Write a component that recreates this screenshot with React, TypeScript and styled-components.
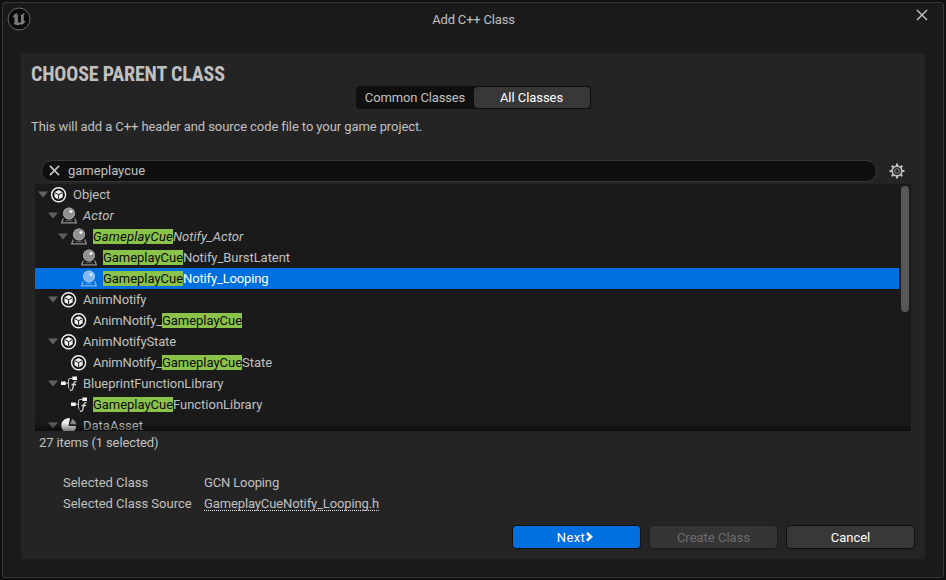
import React from 'react';
import styled, { createGlobalStyle } from 'styled-components';

const GlobalStyle = createGlobalStyle`
  * { box-sizing: border-box; }
  html, body { margin: 0; padding: 0; background: #101010; overflow: hidden; }
  body { font-family: Roboto, "Liberation Sans", sans-serif; font-size: 13px; line-height: 15px; color: #c0c0c0; }
  svg { display: block; flex: none; }
`;

const Desktop = styled.div`
  width: 946px;
  height: 580px;
  padding: 2px;
  background: #101010;
`;

const Window = styled.main`
  width: 942px;
  height: 576px;
  display: flex;
  flex-direction: column;
  border: 1px solid #383838;
  border-radius: 3px;
  background: #1a1a1a;
`;

const TitleBar = styled.header`
  display: grid;
  grid-template-columns: 40px 1fr 40px;
  height: 50px;
  flex: none;
`;

const LogoSlot = styled.div`
  padding: 4px 0 0 4px;
`;

const Title = styled.h1`
  margin: 0;
  padding: 9px 0 0 1px;
  font-size: 13px;
  line-height: 15px;
  font-weight: 400;
  text-align: center;
  letter-spacing: -0.18px;
`;

const CloseButton = styled.button`
  display: flex;
  justify-content: flex-end;
  align-items: flex-start;
  padding: 6px 15px 0 0;
  border: 0;
  background: none;
  color: #c8c8c8;
`;

const Panel = styled.section`
  width: 904px;
  height: 506px;
  margin-left: 18px;
  display: flex;
  flex-direction: column;
  background: #242424;
`;

const Heading = styled.h2`
  margin: 10px 0 1px 10px;
  height: 22px;
  font-family: "Roboto Condensed", Roboto, sans-serif;
  font-size: 20px;
  line-height: 22px;
  font-weight: 700;
  letter-spacing: -0.17px;
`;

const Segments = styled.div`
  display: grid;
  grid-template-columns: 117px 116px;
  width: 235px;
  height: 23px;
  margin-left: 335px;
  padding: 1px;
  border-radius: 4px;
  background: #0f0f0f;
`;

const Segment = styled.button<{ $active?: boolean }>`
  padding: 0 1px 0 0;
  border: 0;
  border-radius: 4px;
  background: ${p => (p.$active ? '#383838' : 'transparent')};
  color: ${p => (p.$active ? '#ffffff' : '#c0c0c0')};
  font: 13px/21px Roboto, sans-serif;
  letter-spacing: ${p => (p.$active ? '-0.05px' : '-0.13px')};
`;

const Description = styled.p`
  margin: 10px 0 0 10px;
  letter-spacing: -0.088px;
`;

const SearchRow = styled.div`
  display: flex;
  align-items: center;
  height: 22px;
  margin: 26px 0 2px 20px;
  gap: 12px;
`;

const SearchBox = styled.div`
  display: flex;
  align-items: center;
  gap: 8px;
  width: 836px;
  height: 22px;
  padding: 0 0 1px 7px;
  border: 1px solid #383838;
  border-radius: 11px;
  background: #0f0f0f;
`;

const TreeView = styled.div`
  position: relative;
  display: flex;
  width: 876px;
  height: 247px;
  margin-left: 14px;
  overflow: hidden;
  background: #1a1a1a;
`;

const Rows = styled.div`
  width: 864px;
`;

const Row = styled.div<{ $level: number; $selected?: boolean }>`
  display: flex;
  align-items: center;
  height: 21px;
  padding-left: ${p => 3 + p.$level * 10}px;
  background: ${p => (p.$selected ? '#0070e0' : 'transparent')};
  color: ${p => (p.$selected ? '#ffffff' : '#c0c0c0')};
`;

const Expander = styled.span`
  display: block;
  width: 12px;
  height: 7px;
`;

const IconSlot = styled.span`
  display: block;
  width: 23px;
  height: 17px;
`;

const Label = styled.span<{ $italic?: boolean }>`
  display: flex;
  height: 15px;
  white-space: pre;
  font-style: ${p => (p.$italic ? 'italic' : 'normal')};
`;

const Fragment = styled.span<{ $spacing: number; $match?: boolean }>`
  letter-spacing: ${p => p.$spacing}px;
  background: ${p => (p.$match ? '#8bc34a' : 'transparent')};
  color: ${p => (p.$match ? '#0a0a0a' : 'inherit')};
  width: ${p => (p.$match ? '80px' : 'auto')};
`;

const ScrollThumb = styled.div`
  width: 8px;
  height: 126px;
  margin: 2px 0 0 2px;
  border-radius: 4px;
  background: #575757;
`;

const EdgeShade = styled.div`
  position: absolute;
  left: 0;
  right: 0;
  bottom: 0;
  height: 8px;
  background: linear-gradient(to bottom, rgba(0, 0, 0, 0), rgba(0, 0, 0, 0.5));
`;

const Status = styled.div`
  margin: 4px 0 0 18px;
  letter-spacing: -0.12px;
`;

const Details = styled.dl`
  display: grid;
  grid-template-columns: 141px auto;
  grid-auto-rows: 21px;
  justify-content: start;
  margin: 25px 0 0 42px;
`;

const Term = styled.dt`
  letter-spacing: -0.01px;
`;

const Value = styled.dd`
  margin: 0;
  letter-spacing: -0.14px;
`;

const SourceLink = styled.a`
  display: block;
  height: 15px;
  letter-spacing: -0.12px;
  width: 175px;
  background: repeating-linear-gradient(to right, #e8e8e8 0 1px, transparent 1px 2px) left bottom / 100% 1px no-repeat;
`;

const Footer = styled.footer`
  display: flex;
  justify-content: flex-end;
  gap: 8px;
  margin-top: auto;
  padding: 0 10px 10px 0;
`;

const Button = styled.button<{ $kind: 'primary' | 'normal' | 'disabled' }>`
  display: flex;
  align-items: center;
  justify-content: center;
  gap: 1px;
  width: 129px;
  height: 24px;
  padding: 0 ${p => (p.$kind === 'primary' ? '2px' : '0')} 0 0;
  border: 1px solid ${p => (p.$kind === 'disabled' ? '#1c1c1c' : '#0f0f0f')};
  border-radius: 4px;
  background: ${p => ({ primary: '#0070e0', normal: '#383838', disabled: '#353535' })[p.$kind]};
  color: ${p => (p.$kind === 'disabled' ? '#6c6c6c' : '#ffffff')};
  font: 13px/15px Roboto, sans-serif;
  letter-spacing: ${p => (p.$kind === 'primary' ? '0.4px' : '0')};
`;

const UnrealLogo = () => (
  <svg width="24" height="24" viewBox="0 0 24 24">
    <circle cx="12" cy="12" r="11" fill="#0b0b0b" stroke="#686868" strokeWidth="1" />
    <path
      d="M10.8 5.7C8 6.5 6 8.500 5.300 11.500C6.200 10.300 7 9.900 7.500 10.200V15.200C7.500 16 7.100 16.200 6.600 16.100C7.700 17.700 9.500 18.400 11.700 18.300L13.300 16.900L14.700 17.800C16.800 16.900 18.200 15.400 18.700 13.200C18 14 17.300 14.300 16.800 14.100V8.800C16.800 7.600 17.400 6.800 18.300 6.100C16.800 6.300 15.600 6.900 14.600 7.900L13.300 7.500C13.900 7.900 14 8.300 14 8.900V14.800C13.400 15.500 12.800 15.800 12.200 15.800C11.400 15.800 10.900 15.400 10.900 14.800V8.700C10.900 8.100 11.100 7.700 11.500 7.300C10.500 7.500 9.900 7.900 9.300 8.400C9.600 7.300 10.100 6.400 10.800 5.700Z"
      fill="#7c7c7c"
    />
  </svg>
);

const CrossIcon = ({ size, weight }: { size: number; weight: number }) => (
  <svg width={size} height={size} viewBox="0 0 12 12">
    <path d="M1 1L11 11M11 1L1 11" fill="none" stroke="currentColor" strokeWidth={weight} />
  </svg>
);

const GearIcon = () => (
  <svg width="16" height="16" viewBox="0 0 16 16" fill="none" stroke="#c0c0c0">
    <circle cx="8" cy="8" r="4.800" strokeWidth="1.700" />
    <circle cx="8" cy="8" r="2.200" strokeWidth="1.100" stroke="#7a7a7a" />
    <path
      d="M8 .5V3M8 13V15.500M.5 8H3M13 8H15.500M2.700 2.700L4.500 4.500M11.500 11.500L13.300 13.300M2.700 13.300L4.500 11.500M11.500 4.500L13.300 2.700"
      strokeWidth="2"
    />
  </svg>
);

const Triangle = () => (
  <svg width="10" height="7" viewBox="0 0 10 7">
    <path d="M0 .5H10L5 6.500Z" fill="#606060" />
  </svg>
);

const ObjectIcon = () => (
  <svg width="17" height="17" viewBox="0 0 17 17">
    <circle cx="8.600" cy="8.800" r="7" fill="#101010" stroke="#f2f2f2" strokeWidth="1.400" />
    <path d="M8.600 4L12.700 6.200V11.200L8.600 13.500L4.500 11.200V6.200Z" fill="#f2f2f2" />
    <path d="M4.900 6.700L8.600 8.700L12.300 6.700M8.600 8.700V13.100" fill="none" stroke="#151515" strokeWidth="1" />
  </svg>
);

const ActorIcon = ({ selected }: { selected?: boolean }) => {
  const tone = selected ? '#80b8f0' : '#909090';
  return (
    <svg width="17" height="17" viewBox="0 0 17 17">
      <path d="M3.300 11.500L1.700 15.800H16.300L14.700 11.500" fill="none" stroke={tone} strokeWidth="1.300" />
      <circle cx="9" cy="6.500" r="6.700" fill={selected ? '#0070e0' : '#1a1a1a'} />
      <circle cx="9" cy="6.500" r="6" fill={tone} />
      <circle cx="9" cy="6.500" r="5.500" fill="none" stroke={selected ? '#a4cdf6' : '#aaaaaa'} strokeWidth=".8" />
      <circle cx="10.900" cy="4.500" r="1.600" fill={selected ? '#d8eafc' : '#f0f0f0'} />
      <path d="M5.500 13.700H12.500" stroke={tone} strokeWidth="1" opacity=".6" />
    </svg>
  );
};

const FunctionIcon = () => (
  <svg width="17" height="17" viewBox="0 0 17 17">
    <path d="M1 6.500H5.800V10H1ZM12.300 1.500H17V5H12.300Z" fill="#f4f4f4" />
    <path d="M5 8.200H8.500M12.300 3.500H10Q8.500 3.500 8.500 5V12Q8.500 13.500 9.500 13.500" fill="none" stroke="#c4c4c4" strokeWidth="1" />
    <path d="M16.500 6.900Q14.400 5.900 13.900 8.500L12.900 13Q12.400 15.900 10 15.100M11.500 9.500H16.100" fill="none" stroke="#d4d4d4" strokeWidth="1.300" />
  </svg>
);

const PieIcon = () => (
  <svg width="17" height="17" viewBox="0 0 17 17">
    <path d="M10 1.200A7.500 7.500 0 1 0 16.300 9.200L8.500 8.800Z" fill="#ececec" />
    <path d="M12.300 2L10 7.300L16.300 7.500A7.500 7.500 0 0 0 12.300 2Z" fill="#8c8c8c" />
  </svg>
);

const NextChevron = () => (
  <svg width="8" height="10" viewBox="0 0 8 10">
    <path d="M1 1L5 4.800L1 8.600" fill="none" stroke="#ffffff" strokeWidth="2.600" />
  </svg>
);

type Icon = 'object' | 'actor' | 'function' | 'pie';
type Part = { text: string; spacing: number; match?: boolean };
type Item = { level: number; icon: Icon; parts: Part[]; open?: boolean; italic?: boolean; selected?: boolean };

const cue = (spacing = -0.03): Part => ({ text: 'GameplayCue', spacing, match: true });

const items: Item[] = [
  { level: 0, icon: 'object', open: true, parts: [{ text: 'Object', spacing: 0 }] },
  { level: 1, icon: 'actor', open: true, italic: true, parts: [{ text: 'Actor', spacing: 0.1 }] },
  { level: 2, icon: 'actor', open: true, italic: true, parts: [cue(0.18), { text: 'Notify_Actor', spacing: 0.05 }] },
  { level: 3, icon: 'actor', parts: [cue(), { text: 'Notify_BurstLatent', spacing: -0.05 }] },
  { level: 3, icon: 'actor', selected: true, parts: [cue(), { text: 'Notify_Looping', spacing: -0.14 }] },
  { level: 1, icon: 'object', open: true, parts: [{ text: 'AnimNotify', spacing: -0.17 }] },
  { level: 2, icon: 'object', parts: [{ text: 'AnimNotify_', spacing: -0.17 }, cue()] },
  { level: 1, icon: 'object', open: true, parts: [{ text: 'AnimNotifyState', spacing: -0.15 }] },
  { level: 2, icon: 'object', parts: [{ text: 'AnimNotify_', spacing: -0.17 }, cue(), { text: 'State', spacing: 0 }] },
  { level: 1, icon: 'function', open: true, parts: [{ text: 'BlueprintFunctionLibrary', spacing: -0.03 }] },
  { level: 2, icon: 'function', parts: [cue(), { text: 'FunctionLibrary', spacing: -0.02 }] },
  { level: 1, icon: 'pie', open: true, parts: [{ text: 'DataAsset', spacing: 0 }] },
];

const ItemIcon = ({ icon, selected }: { icon: Icon; selected?: boolean }) => {
  if (icon === 'actor') return <ActorIcon selected={selected} />;
  if (icon === 'function') return <FunctionIcon />;
  if (icon === 'pie') return <PieIcon />;
  return <ObjectIcon />;
};

export default function App() {
  return (
    <Desktop>
      <GlobalStyle />
      <Window>
        <TitleBar>
          <LogoSlot><UnrealLogo /></LogoSlot>
          <Title>Add C++ Class</Title>
          <CloseButton aria-label="Close"><CrossIcon size={12} weight={1.4} /></CloseButton>
        </TitleBar>
        <Panel>
          <Heading>CHOOSE PARENT CLASS</Heading>
          <Segments>
            <Segment>Common Classes</Segment>
            <Segment $active>All Classes</Segment>
          </Segments>
          <Description>This will add a C++ header and source code file to your game project.</Description>
          <SearchRow>
            <SearchBox><CrossIcon size={11} weight={1.9} />gameplaycue</SearchBox>
            <GearIcon />
          </SearchRow>
          <TreeView>
            <Rows>
              {items.map((item, i) => (
                <Row key={i} $level={item.level} $selected={item.selected}>
                  <Expander>{item.open && <Triangle />}</Expander>
                  <IconSlot><ItemIcon icon={item.icon} selected={item.selected} /></IconSlot>
                  <Label $italic={item.italic}>
                    {item.parts.map((part, j) => (
                      <Fragment key={j} $spacing={part.spacing} $match={part.match}>{part.text}</Fragment>
                    ))}
                  </Label>
                </Row>
              ))}
            </Rows>
            <ScrollThumb />
            <EdgeShade />
          </TreeView>
          <Status>27 items (1 selected)</Status>
          <Details>
            <Term>Selected Class</Term>
            <Value>GCN Looping</Value>
            <Term>Selected Class Source</Term>
            <Value><SourceLink>GameplayCueNotify_Looping.h</SourceLink></Value>
          </Details>
          <Footer>
            <Button $kind="primary">Next<NextChevron /></Button>
            <Button $kind="disabled">Create Class</Button>
            <Button $kind="normal">Cancel</Button>
          </Footer>
        </Panel>
      </Window>
    </Desktop>
  );
}
